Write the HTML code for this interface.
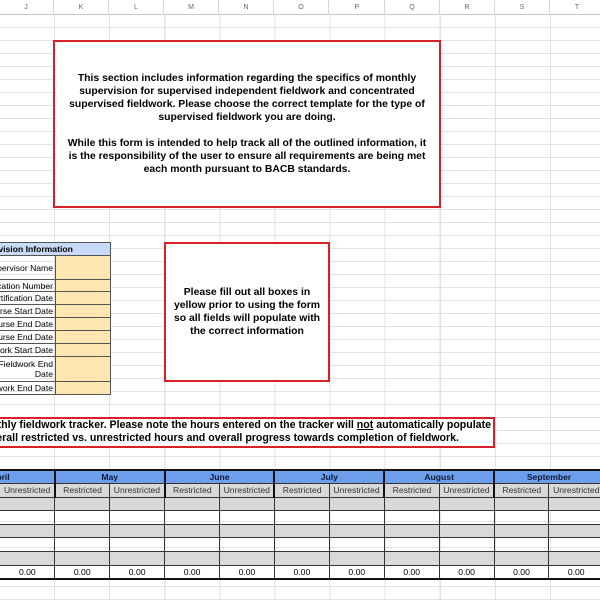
<!DOCTYPE html>
<html><head><style>
*{margin:0;padding:0;box-sizing:border-box}
body{width:600px;height:600px;overflow:hidden;background:#fff;position:relative;font-family:"Liberation Sans",Arial,sans-serif;color:#000}
.grid{position:absolute;left:0;top:15px;width:600px;height:585px;
background-image:repeating-linear-gradient(90deg,transparent 0,transparent 54px,#e2e2e2 54px,#e2e2e2 55.1px),repeating-linear-gradient(180deg,transparent 0,transparent 12px,#e2e2e2 12px,#e2e2e2 13px)}
.hdr{position:absolute;top:0;left:0;width:600px;height:15px;background:#fff;border-bottom:1px solid #c8c8c8}
.hdr div{position:absolute;top:0;height:15px;width:55px;text-align:center;font-size:7px;line-height:15px;color:#666;border-right:1px solid #d8d8d8}
.box{position:absolute;border:2px solid #d9202a;background:#fff;display:flex;align-items:center;justify-content:center;text-align:center;font-weight:bold;font-size:10.4px;line-height:13px}
.it{position:absolute;left:-60px;top:242px;border-collapse:collapse;font-size:8.6px;table-layout:fixed;width:170px}
.it td{border:1px solid #555;padding:0 2px;text-align:right;line-height:10px;white-space:nowrap;overflow:hidden}
.tt{position:absolute;left:-56px;top:469px;border-collapse:collapse;font-size:8.6px;border:2px solid #111;table-layout:fixed;width:661px}
.tt td{border:1px solid #333;text-align:center;height:13.6px;padding:0;white-space:nowrap;overflow:hidden}
.ln{position:absolute;white-space:nowrap;font-weight:bold;font-size:10.6px;line-height:13px}
</style></head><body>
<div class="grid"></div>
<div class="hdr">
<div style="left:-1px">J</div><div style="left:54px">K</div><div style="left:109px">L</div><div style="left:164px">M</div><div style="left:219px">N</div><div style="left:274px">O</div><div style="left:330px">P</div><div style="left:385px">Q</div><div style="left:440px">R</div><div style="left:495px">S</div><div style="left:550px">T</div>
</div>
<div class="box" style="left:53px;top:40px;width:388px;height:168px"><div>This section includes information regarding the specifics of monthly<br>supervision for supervised independent fieldwork and concentrated<br>supervised fieldwork. Please choose the correct template for the type of<br>supervised fieldwork you are doing.<br><br>While this form is intended to help track all of the outlined information, it<br>is the responsibility of the user to ensure all requirements are being met<br>each month pursuant to BACB standards.</div></div>
<table class="it">
<colgroup><col style="width:115px"><col style="width:55px"></colgroup>
<tr style="height:13px"><td colspan="2" style="background:#c9daf8;font-weight:bold;text-align:left;padding-left:33px">Supervision Information</td></tr>
<tr style="height:24px"><td>Supervisor Name</td><td style="background:#fde6b1"></td></tr>
<tr style="height:12px"><td>Certification Number</td><td style="background:#fde6b1"></td></tr>
<tr style="height:13px"><td>Certification Date</td><td style="background:#fde6b1"></td></tr>
<tr style="height:13px"><td>Course Start Date</td><td style="background:#fde6b1"></td></tr>
<tr style="height:13px"><td>Course End Date</td><td style="background:#fde6b1"></td></tr>
<tr style="height:13px"><td>Course End Date</td><td style="background:#fde6b1"></td></tr>
<tr style="height:13px"><td>Fieldwork Start Date</td><td style="background:#fde6b1"></td></tr>
<tr style="height:25px"><td>Fieldwork End<br>Date</td><td style="background:#fde6b1"></td></tr>
<tr style="height:13px"><td>Fieldwork End Date</td><td style="background:#fde6b1"></td></tr>
</table>
<div class="box" style="left:164px;top:242px;width:166px;height:140px"><div>Please fill out all boxes in<br>yellow prior to using the form<br>so all fields will populate with<br>the correct information</div></div>
<div class="box" style="left:-200px;top:417px;width:695px;height:31px"></div>
<div class="ln" style="right:109px;top:419px">Please use the monthly fieldwork tracker. Please note the hours entered on the tracker will <u>not</u> automatically populate</div>
<div class="ln" style="right:141px;top:432px">the overall restricted vs. unrestricted hours and overall progress towards completion of fieldwork.</div>
<table class="tt">
<tr style="background:#6d9eeb;font-weight:bold;color:#0b1a3a"><td colspan="2" style="border-right:2px solid #111">April</td><td colspan="2" style="border-right:2px solid #111">May</td><td colspan="2" style="border-right:2px solid #111">June</td><td colspan="2" style="border-right:2px solid #111">July</td><td colspan="2" style="border-right:2px solid #111">August</td><td colspan="2">September</td></tr>
<tr style="background:#d9d9d9;color:#333"><td>Restricted</td><td style="border-right:2px solid #111">Unrestricted</td><td>Restricted</td><td style="border-right:2px solid #111">Unrestricted</td><td>Restricted</td><td style="border-right:2px solid #111">Unrestricted</td><td>Restricted</td><td style="border-right:2px solid #111">Unrestricted</td><td>Restricted</td><td style="border-right:2px solid #111">Unrestricted</td><td>Restricted</td><td>Unrestricted</td></tr>
<tr style="background:#d9d9d9"><td></td><td></td><td></td><td></td><td></td><td></td><td></td><td></td><td></td><td></td><td></td><td></td></tr>
<tr><td></td><td></td><td></td><td></td><td></td><td></td><td></td><td></td><td></td><td></td><td></td><td></td></tr>
<tr style="background:#d9d9d9"><td></td><td></td><td></td><td></td><td></td><td></td><td></td><td></td><td></td><td></td><td></td><td></td></tr>
<tr><td></td><td></td><td></td><td></td><td></td><td></td><td></td><td></td><td></td><td></td><td></td><td></td></tr>
<tr style="background:#d9d9d9"><td></td><td></td><td></td><td></td><td></td><td></td><td></td><td></td><td></td><td></td><td></td><td></td></tr>
<tr style="background:#fff"><td>0.00</td><td>0.00</td><td>0.00</td><td>0.00</td><td>0.00</td><td>0.00</td><td>0.00</td><td>0.00</td><td>0.00</td><td>0.00</td><td>0.00</td><td>0.00</td></tr>
</table>
</body></html>
